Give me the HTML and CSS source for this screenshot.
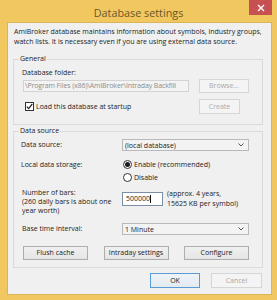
FILE: index.html
```html
<!DOCTYPE html>
<html>
<head>
<meta charset="utf-8">
<title>Database settings</title>
<link rel="stylesheet" href="styles.css">
</head>
<body>
<div class="window">
  <div class="titlebar">
    <span></span>
    <span class="title">Database settings</span>
    <span class="close"><svg width="8" height="8" viewBox="0 0 8 8"><path d="M1 1L7 7M7 1L1 7" stroke="#fff" stroke-width="1.4" fill="none"/></svg></span>
  </div>
  <div class="client">
    <p class="intro">AmiBroker database maintains information about symbols, industry groups,<br>watch lists. It is necessary even if you are using external data source.</p>

    <fieldset class="group general">
      <legend>General</legend>
      <div class="lbl">Database folder:</div>
      <div class="folder-grid">
        <div class="edit disabled">\Program Files (x86)\AmiBroker\Intraday Backfill</div>
        <div class="btn disabled browse">Browse...</div>
        <div class="check"><span class="box"><svg width="7" height="7" viewBox="0 0 7 7"><path d="M0.8 3.6L2.7 5.6L6.3 0.9" stroke="#222" stroke-width="1.3" fill="none"/></svg></span><span>Load this database at startup</span></div>
        <div class="btn disabled create">Create</div>
      </div>
    </fieldset>

    <fieldset class="group source">
      <legend>Data source</legend>
      <div class="row r1">
        <div class="lbl-c">Data source:</div>
        <div class="combo"><span>(local database)</span><svg width="6" height="4" viewBox="0 0 6 4"><path d="M0.5 0.5L3 3L5.5 0.5" stroke="#555" stroke-width="1" fill="none"/></svg></div>
      </div>
      <div class="row r2">
        <div class="lbl-r">Local data storage:</div>
        <div class="radios">
          <div class="radio"><span class="dot on"></span><span>Enable (recommended)</span></div>
          <div class="radio"><span class="dot"></span><span>Disable</span></div>
        </div>
      </div>
      <div class="row r3">
        <div class="lbl-b">Number of bars:<br>(260 daily bars is about one<br>year worth)</div>
        <div class="bars">
          <div class="input">500000<span class="caret"></span></div>
          <div class="approx">(approx. 4 years,<br>15625 KB per symbol)</div>
        </div>
      </div>
      <div class="row r4">
        <div class="lbl-c ind">Base time interval:</div>
        <div class="combo"><span>1 Minute</span><svg width="6" height="4" viewBox="0 0 6 4"><path d="M0.5 0.5L3 3L5.5 0.5" stroke="#555" stroke-width="1" fill="none"/></svg></div>
      </div>
      <div class="actions">
        <div class="btn act">Flush cache</div>
        <div class="btn act">Intraday settings</div>
        <div class="btn act">Configure</div>
      </div>
    </fieldset>

    <div class="footer">
      <div class="btn ok">OK</div>
      <div class="btn disabled cancel">Cancel</div>
    </div>
  </div>
</div>
</body>
</html>
```

FILE: styles.css
```css
* { box-sizing: border-box; }
html, body { margin: 0; padding: 0; }
body {
  width: 277px;
  height: 300px;
  overflow: hidden;
  background: #f1c860;
  font-family: "Open Sans", "Noto Sans", sans-serif;
  font-size: 7px;
  color: #222;
}
.window {
  width: 277px;
  height: 300px;
  background: #f1c860;
  display: flex;
  flex-direction: column;
}
.titlebar {
  height: 23px;
  display: grid;
  grid-template-columns: 1fr auto 1fr;
  align-items: center;
}
.title {
  font-size: 10.8px;
  color: #6b5529;
  line-height: 13px;
  padding-top: 1px;
}
.close {
  justify-self: end;
  align-self: start;
  width: 23px;
  height: 15px;
  margin-right: 5px;
  background: #c75050;
  display: flex;
  align-items: center;
  justify-content: center;
}
.client {
  margin-left: 8px;
  width: 263px;
  height: 271px;
  background: #f0f0f0;
  box-shadow: 0 0 0 1px #dcb55a;
}
.intro {
  margin: 0;
  padding: 4px 0 0 6px;
  line-height: 10px;
  white-space: nowrap;
}
.group {
  margin: 0 8px 0 5px;
  border: 1px solid #dadada;
  min-width: 0;
}
.group legend {
  padding: 0 1px;
  line-height: 10px;
}
.general {
  margin-top: 7px;
  padding: 4px 0 10px 8px;
}
.general legend { margin-left: -3px; }
.lbl { line-height: 10px; }
.folder-grid {
  margin-top: 1px;
  display: grid;
  grid-template-columns: 177px auto;
  row-gap: 6px;
  align-items: center;
}
.edit {
  margin-left: 1px;
  width: 166px;
  height: 12px;
  line-height: 10px;
  padding: 0 1px;
  border: 1px solid #d3d3d3;
  background: #f3f3f3;
  color: #8c8c8c;
  letter-spacing: -0.12px;
  white-space: nowrap;
  overflow: hidden;
}
.btn {
  height: 14px;
  line-height: 12px;
  text-align: center;
  border: 1px solid #adadad;
  background: linear-gradient(#f0f0f0, #e5e5e5);
  color: #222;
  white-space: nowrap;
}
.btn.disabled {
  border-color: #d6d6d6;
  background: #f4f4f4;
  color: #a9a9a9;
}
.browse { width: 50px; }
.create { width: 41px; height: 15px; line-height: 13px; }
.check {
  display: flex;
  align-items: center;
  gap: 2px;
  margin-left: 3px;
}
.box {
  width: 9px;
  height: 9px;
  border: 1px solid #333;
  background: #fff;
  display: flex;
  align-items: center;
  justify-content: center;
}
.source {
  margin-top: 1px;
  padding: 3px 0 7px 7px;
}
.source legend { margin-left: -2px; }
.row {
  display: grid;
  grid-template-columns: 101px 127px;
}
.lbl-c { line-height: 12px; }
.ind { padding-left: 1px; }
.combo {
  height: 12px;
  border: 1px solid #b9b9b9;
  background: #f3f3f3;
  display: flex;
  align-items: center;
  justify-content: space-between;
  padding: 0 4px 0 2px;
}
.r2 { margin-top: 7px; }
.lbl-r { line-height: 13px; }
.radios { margin-left: 1px; }
.radio {
  height: 13px;
  display: flex;
  align-items: center;
  gap: 2px;
}
.dot {
  width: 9px;
  height: 9px;
  border: 1px solid #333;
  border-radius: 50%;
  background: #fff;
  display: flex;
  align-items: center;
  justify-content: center;
}
.dot.on::after {
  content: "";
  width: 5px;
  height: 5px;
  border-radius: 50%;
  background: #1a1a1a;
}
.r3 { margin-top: 4px; }
.lbl-b { line-height: 9px; padding-left: 1px; white-space: nowrap; }
.bars { display: flex; align-items: flex-start; }
.input {
  margin-top: 4px;
  width: 41px;
  height: 14px;
  line-height: 12px;
  padding-left: 3px;
  border: 1px solid #7b8ea5;
  background: #fff;
  display: flex;
  align-items: center;
}
.caret {
  width: 1px;
  height: 8px;
  background: #111;
}
.approx {
  margin-left: 4px;
  margin-top: 1px;
  line-height: 10px;
  white-space: nowrap;
}
.r4 { margin-top: 8px; }
.actions {
  margin-top: 11px;
  margin-left: 2px;
  width: 226px;
  display: flex;
  justify-content: space-between;
}
.act { width: 65px; }
.footer {
  margin-top: 5px;
  padding-right: 9px;
  display: flex;
  justify-content: flex-end;
  gap: 11px;
}
.ok {
  width: 50px;
  height: 15px;
  line-height: 13px;
  border-color: #5b9bd5;
  background: linear-gradient(#eef3f8, #e3eaf1);
}
.cancel { width: 51px; height: 15px; line-height: 13px; }
```
